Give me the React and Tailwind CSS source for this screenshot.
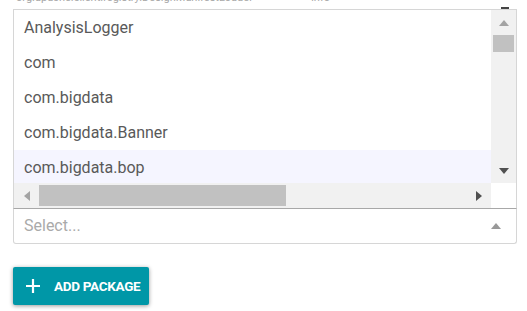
import React from "react";

const items = ["AnalysisLogger", "com", "com.bigdata", "com.bigdata.Banner", "com.bigdata.bop"];

function Tri({ dir, color }) {
  const pts = {
    up: "0,6 5,0 10,6",
    down: "0,0 10,0 5,6",
    left: "6,0 6,10 0,5",
    right: "0,0 0,10 6,5",
  }[dir];
  const w = dir === "up" || dir === "down" ? 10 : 6;
  const h = dir === "up" || dir === "down" ? 6 : 10;
  return (
    <svg width={w} height={h} viewBox={`0 0 ${w} ${h}`}>
      <polygon points={pts} fill={color} />
    </svg>
  );
}

export default function App() {
  return (
    <div
      className="w-[527px] h-[311px] bg-white overflow-hidden relative"
      style={{ fontFamily: "Roboto, 'Liberation Sans', sans-serif" }}
    >
      {/* background row partially hidden */}
      <div className="h-[9px] overflow-hidden relative">
        <div className="flex items-center mt-[-9px] h-[14px] pl-[16px] pr-[19px] text-[11px] text-[#a8a8a8] whitespace-nowrap">
          <span>org.apache.client.registry.DesignManifestLoader</span>
          <span className="ml-[58px]">Info</span>
          <span className="flex-1" />
        </div>
        <div className="absolute left-[501px] top-[7px] w-[8px] h-[2px] bg-[#444]" />
      </div>

      {/* dropdown menu */}
      <div className="ml-[13px] w-[504px] border border-[#d6d6d6] border-b-[#a8a8a8] bg-white flex flex-col">
        <div className="flex h-[173px]">
          <div className="flex-1 overflow-hidden">
            {items.map((t, i) => (
              <div
                key={t}
                className={`h-[35px] flex items-center pl-[10px] text-[16px] text-[#595959] whitespace-nowrap ${
                  i === 4 ? "bg-[#f5f5ff]" : ""
                }`}
              >
                {t}
              </div>
            ))}
          </div>
          {/* vertical scrollbar */}
          <div className="w-[25px] bg-[#f1f1f1] flex flex-col">
            <div className="h-[25px] flex items-center justify-center">
              <Tri dir="up" color="#a3a3a3" />
            </div>
            <div className="mx-[2px] h-[17px] bg-[#c1c1c1]" />
            <div className="flex-1" />
            <div className="h-[25px] flex items-center justify-center">
              <Tri dir="down" color="#505050" />
            </div>
          </div>
        </div>
        {/* horizontal scrollbar */}
        <div className="flex h-[25px]">
          <div className="flex-1 bg-[#f1f1f1] flex items-center">
            <div className="w-[25px] flex items-center justify-center">
              <Tri dir="left" color="#a3a3a3" />
            </div>
            <div className="w-[247px] h-[21px] bg-[#c1c1c1]" />
            <div className="flex-1" />
            <div className="w-[25px] flex items-center justify-center">
              <Tri dir="right" color="#505050" />
            </div>
          </div>
          <div className="w-[25px] bg-white" />
        </div>
      </div>

      {/* select */}
      <div className="ml-[13px] w-[504px] h-[35px] border border-t-0 border-[#d6d6d6] rounded-b-[3px] flex items-center pl-[10px] pr-[15px]">
        <span className="flex-1 text-[16px] text-[#aaa]">Select...</span>
        <Tri dir="up" color="#999" />
      </div>

      {/* button */}
      <div className="mt-[23px] ml-[13px]">
        <button className="w-[136px] h-[38px] bg-[#0097a7] rounded-[2px] shadow-[0_1px_4px_rgba(0,0,0,0.4)] flex items-center pl-[12px] text-white">
          <svg width="16" height="16" viewBox="0 0 16 16">
            <path d="M8 1v14M1 8h14" stroke="white" strokeWidth="2.2" />
          </svg>
          <span className="ml-[13px] text-[13.5px] font-bold tracking-[-0.3px]">ADD PACKAGE</span>
        </button>
      </div>
    </div>
  );
}
